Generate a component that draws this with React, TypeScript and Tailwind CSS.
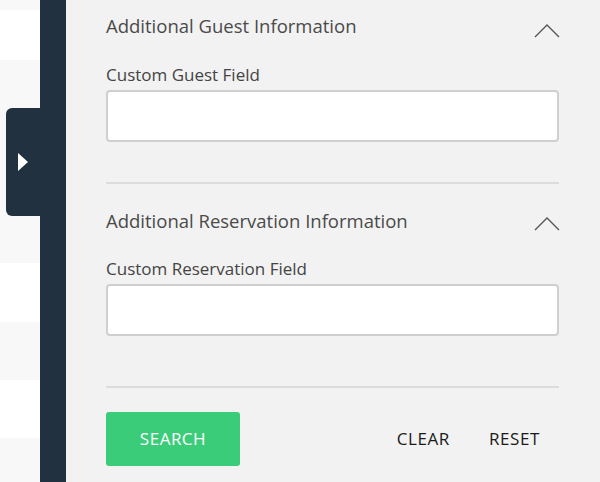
// left list rows peeking out behind the drawer
const rows = [
  { h: 'h-[10px]', bg: 'bg-[#f8f8f8]' },
  { h: 'h-[50px]', bg: 'bg-white' },
  { h: 'h-[203px]', bg: 'bg-[#f8f8f8]' },
  { h: 'h-[59px]', bg: 'bg-white' },
  { h: 'h-[58px]', bg: 'bg-[#f8f8f8]' },
  { h: 'h-[58px]', bg: 'bg-white' },
  { h: 'h-[44px]', bg: 'bg-[#f8f8f8]' },
]

function Chevron({ className }: { className?: string }) {
  return (
    <svg width="26" height="14" viewBox="0 0 26 14" className={className}>
      <polyline points="1,13 13,1 25,13" fill="none" stroke="#555" strokeWidth="1.4" />
    </svg>
  )
}

function Section({
  title,
  label,
  headTop,
  labelTop,
  chevTop,
}: {
  title: string
  label: string
  headTop: string
  labelTop: string
  chevTop: string
}) {
  return (
    <div>
      <div className={`flex items-start justify-between ${headTop}`}>
        <h3 className="text-[18.5px] leading-[24px] text-[#4a4a4a]">{title}</h3>
        <Chevron className={`-mr-[1px] ${chevTop}`} />
      </div>
      <label className={`block text-[17px] leading-[20px] text-[#444] ${labelTop}`}>{label}</label>
      <input
        type="text"
        className="mt-[5px] block h-[52px] w-full rounded-[4px] border-2 border-[#cfcfcf] bg-white px-3 outline-none"
      />
    </div>
  )
}

export default function App() {
  return (
    <div className="flex h-[482px] w-[600px] overflow-hidden font-['Open_Sans',sans-serif]">
      {/* background list */}
      <div className="relative w-[40px] shrink-0">
        {rows.map((r, i) => (
          <div key={i} className={`${r.h} ${r.bg}`} />
        ))}
        {/* drawer toggle tab */}
        <button className="absolute left-[6px] top-[108px] flex h-[108px] w-[34px] items-center rounded-l-[6px] bg-[#22313f] pl-[12px]">
          <svg width="10" height="18" viewBox="0 0 10 18">
            <path d="M0 0 L10 9 L0 18 Z" fill="#fff" />
          </svg>
        </button>
      </div>
      <div className="w-[26px] shrink-0 bg-[#22313f]" />

      {/* drawer panel */}
      <div className="flex-1 bg-[#f2f2f2] pl-[40px] pr-[41px]">
        <Section
          title="Additional Guest Information"
          label="Custom Guest Field"
          headTop="pt-[14px]"
          labelTop="mt-[27px]"
          chevTop="mt-[10px]"
        />
        <div className="mt-[40px] h-[2px] bg-[#dcdcdc]" />
        <Section
          title="Additional Reservation Information"
          label="Custom Reservation Field"
          headTop="pt-[25px]"
          labelTop="mt-[26px]"
          chevTop="mt-[8px]"
        />
        <div className="mt-[50px] h-[2px] bg-[#dcdcdc]" />
        <div className="mt-[24px] flex items-center">
          <button className="h-[54px] w-[134px] rounded-[3px] bg-[#3bcc7a] text-[17px] font-medium tracking-[0.5px] text-white">
            SEARCH
          </button>
          <button className="ml-auto mr-[39px] text-[17px] tracking-[0.6px] text-[#1a1a1a]">CLEAR</button>
          <button className="mr-[19px] text-[17px] tracking-[0.6px] text-[#1a1a1a]">RESET</button>
        </div>
      </div>
    </div>
  )
}
